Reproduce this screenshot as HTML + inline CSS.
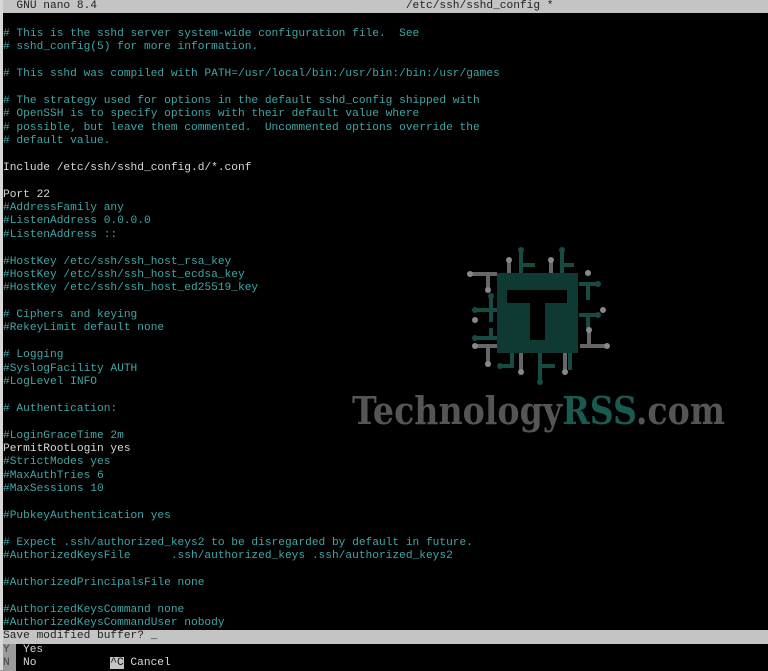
<!DOCTYPE html>
<html><head><meta charset="utf-8"><style>
html,body{margin:0;padding:0;background:#000;width:768px;height:670px;overflow:hidden}
.t{position:absolute;left:0;top:0;width:768px;font-family:"Liberation Mono",monospace;font-size:11.2px;line-height:13.4px;color:#40a6a6}
.l{height:13.4px;padding-left:3px;white-space:pre;overflow:hidden}
.w{color:#d8d8d8}
.bar{background:#c4c4c4;color:#222}
.edge{position:absolute;left:0;top:0;width:3px;height:670px;background:#d8d8d8}
.k{display:inline-block;width:16px;background:#9a9a9a;color:#444;margin-left:-3px;padding-left:3px;box-sizing:border-box;margin-right:7px}
</style></head><body>
<div class="t"><div class="l bar">  GNU nano 8.4                                              /etc/ssh/sshd_config *</div><div class="l" style="height:14.5px"></div><div class="l"># This is the sshd server system-wide configuration file.  See</div><div class="l"># sshd_config(5) for more information.</div><div class="l"></div><div class="l"># This sshd was compiled with PATH=/usr/local/bin:/usr/bin:/bin:/usr/games</div><div class="l"></div><div class="l"># The strategy used for options in the default sshd_config shipped with</div><div class="l"># OpenSSH is to specify options with their default value where</div><div class="l"># possible, but leave them commented.  Uncommented options override the</div><div class="l"># default value.</div><div class="l"></div><div class="l w">Include /etc/ssh/sshd_config.d/*.conf</div><div class="l"></div><div class="l w">Port 22</div><div class="l">#AddressFamily any</div><div class="l">#ListenAddress 0.0.0.0</div><div class="l">#ListenAddress ::</div><div class="l"></div><div class="l">#HostKey /etc/ssh/ssh_host_rsa_key</div><div class="l">#HostKey /etc/ssh/ssh_host_ecdsa_key</div><div class="l">#HostKey /etc/ssh/ssh_host_ed25519_key</div><div class="l"></div><div class="l"># Ciphers and keying</div><div class="l">#RekeyLimit default none</div><div class="l"></div><div class="l"># Logging</div><div class="l">#SyslogFacility AUTH</div><div class="l">#LogLevel INFO</div><div class="l"></div><div class="l"># Authentication:</div><div class="l"></div><div class="l">#LoginGraceTime 2m</div><div class="l w">PermitRootLogin yes</div><div class="l">#StrictModes yes</div><div class="l">#MaxAuthTries 6</div><div class="l">#MaxSessions 10</div><div class="l"></div><div class="l">#PubkeyAuthentication yes</div><div class="l"></div><div class="l"># Expect .ssh/authorized_keys2 to be disregarded by default in future.</div><div class="l">#AuthorizedKeysFile      .ssh/authorized_keys .ssh/authorized_keys2</div><div class="l"></div><div class="l">#AuthorizedPrincipalsFile none</div><div class="l"></div><div class="l">#AuthorizedKeysCommand none</div><div class="l">#AuthorizedKeysCommandUser nobody</div><div class="l bar">Save modified buffer? _</div><div class="l w"><span class="k">Y</span>Yes</div><div class="l w"><span class="k">N</span>No           <span style="background:#c4c4c4;color:#111">^C</span> Cancel</div></div>
<div class="edge"></div>
<svg style="position:absolute;left:0;top:0" width="768" height="670">
<g stroke-width="4" fill="none">
<g stroke="#666">
<path d="M470 274H497M488 274V290M509 262V273M551 262V273M557 310H578M580 346H607M589 332V346M475 346H497M488 346V362M521 353V370M565 353V370"/>
</g>
<g stroke="#174a43">
<path d="M521 250V273M521 265H535M562 250V273M562 265H574M475 310H497M491 296V322M475 338H497M491 328V338M579 284H598M588 284V300M579 315H598M588 315V328M500 366H512V353M540 380V353M542 366H555M570 370V353"/>
</g>
<g fill="#888" stroke="none">
<circle cx="470" cy="274" r="3"/><circle cx="488" cy="290" r="3"/><circle cx="509" cy="260" r="3"/><circle cx="551" cy="260" r="3"/><circle cx="603" cy="310" r="3"/><circle cx="607" cy="346" r="3"/><circle cx="589" cy="330" r="3"/><circle cx="475" cy="346" r="3"/><circle cx="488" cy="364" r="3"/><circle cx="521" cy="372" r="3"/><circle cx="565" cy="372" r="3"/><circle cx="475" cy="320" r="3"/><circle cx="588" cy="273" r="3"/>
</g>
<g fill="#174a43" stroke="none">
<circle cx="521" cy="250" r="3"/><circle cx="562" cy="250" r="3"/><circle cx="475" cy="310" r="3"/><circle cx="491" cy="296" r="3"/><circle cx="475" cy="338" r="3"/><circle cx="598" cy="284" r="3"/><circle cx="598" cy="315" r="3"/><circle cx="500" cy="366" r="3"/><circle cx="540" cy="382" r="3"/>
</g>
</g>
<rect x="497" y="273" width="81" height="80" fill="#0f3a34"/>
<rect x="507" y="290" width="60" height="13" fill="#000"/>
<rect x="530" y="290" width="15" height="50" fill="#000"/>
<text x="352" y="424" font-family="DejaVu Serif, serif" font-weight="bold" font-size="38" textLength="373" lengthAdjust="spacingAndGlyphs" fill="#555">Technology<tspan fill="#1a5a50">RSS</tspan>.com</text>
</svg>
</body></html>
